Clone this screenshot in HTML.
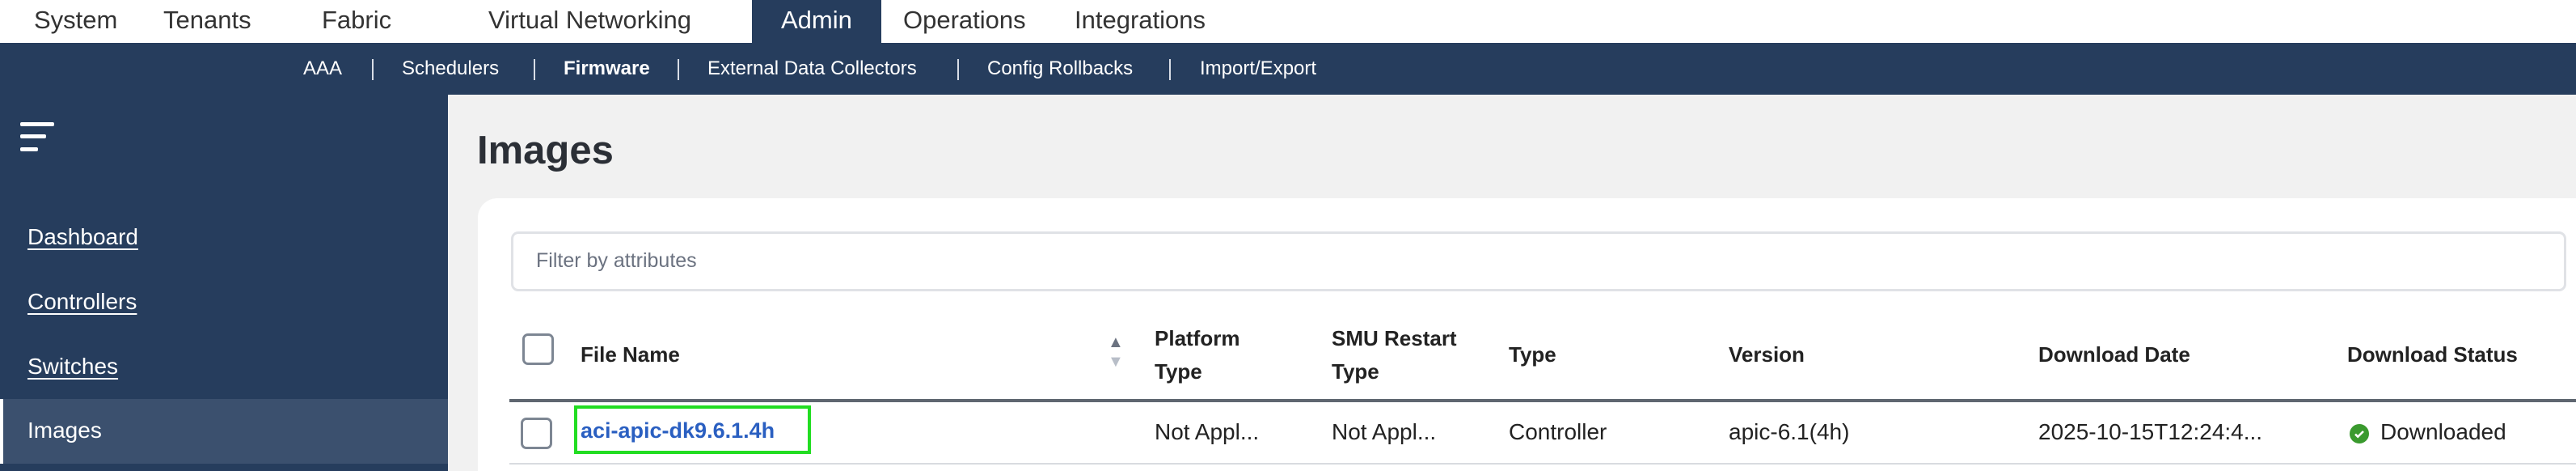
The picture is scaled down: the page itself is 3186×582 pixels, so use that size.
<!DOCTYPE html>
<html style="overflow:hidden;height:582px"><head><meta charset="utf-8"><style>
*{margin:0;padding:0;box-sizing:border-box}
body{width:3186px;height:582px;overflow:hidden;background:#f1f1f1;font-family:"Liberation Sans",sans-serif;position:relative}
.a{position:absolute;white-space:nowrap}
.top{left:0;top:0;width:3186px;height:53px;background:#fff}
.tn{font-size:31px;color:#333;top:7px}
.sub{left:0;top:53px;width:3186px;height:64px;background:#263d5d}
.sn{font-size:24px;color:#fff;top:71px}
.sep{width:2px;height:26px;background:#d8dde6;top:73px}
.side{left:0;top:117px;width:554px;height:465px;background:#263d5d}
.hb{background:#fff;height:5px;border-radius:2px;left:25px}
.si{font-size:28px;color:#fff;left:34px;text-decoration:underline;text-underline-offset:5px}
.card{left:591px;top:245px;width:2595px;height:337px;background:#fff;border-radius:24px 0 0 0}
.th{font-size:26px;font-weight:bold;color:#222}
.td{font-size:28px;color:#222;top:518px}
.cb{width:39px;height:39px;border:3px solid #7d8693;border-radius:7px;background:#fff}
</style></head><body>
<div class="a top"></div>
<div class="a" style="left:930px;top:0;width:160px;height:53px;background:#263d5d"></div>
<div class="a tn" style="left:42px">System</div>
<div class="a tn" style="left:202px">Tenants</div>
<div class="a tn" style="left:398px">Fabric</div>
<div class="a tn" style="left:604px">Virtual Networking</div>
<div class="a tn" style="left:966px;color:#fff">Admin</div>
<div class="a tn" style="left:1117px">Operations</div>
<div class="a tn" style="left:1329px">Integrations</div>
<div class="a sub"></div>
<div class="a sn" style="left:375px">AAA</div>
<div class="a sep" style="left:460px"></div>
<div class="a sn" style="left:497px">Schedulers</div>
<div class="a sep" style="left:660px"></div>
<div class="a sn" style="left:697px;font-weight:bold">Firmware</div>
<div class="a sep" style="left:838px"></div>
<div class="a sn" style="left:875px">External Data Collectors</div>
<div class="a sep" style="left:1184px"></div>
<div class="a sn" style="left:1221px">Config Rollbacks</div>
<div class="a sep" style="left:1446px"></div>
<div class="a sn" style="left:1484px">Import/Export</div>
<div class="a side"></div>
<div class="a hb" style="top:151px;width:42px"></div>
<div class="a hb" style="top:166px;width:32px"></div>
<div class="a hb" style="top:182px;width:22px"></div>
<div class="a si" style="top:277px">Dashboard</div>
<div class="a si" style="top:357px">Controllers</div>
<div class="a si" style="top:437px">Switches</div>
<div class="a" style="left:0;top:493px;width:554px;height:80px;background:#3b506e"></div>
<div class="a" style="left:0;top:493px;width:4px;height:80px;background:#fff"></div>
<div class="a" style="left:34px;top:516px;font-size:28px;color:#fff">Images</div>
<div class="a" style="left:590px;top:158px;font-size:49px;font-weight:bold;color:#2b2f36">Images</div>
<div class="a card"></div>
<div class="a" style="left:632px;top:286px;width:2542px;height:74px;border:3px solid #e0e2e6;border-radius:9px;background:#fff"></div>
<div class="a" style="left:663px;top:308px;font-size:25px;color:#6b7280">Filter by attributes</div>
<div class="a cb" style="left:646px;top:412px"></div>
<div class="a th" style="left:718px;top:423px">File Name</div>
<div class="a" style="left:1370px;top:411px;font-size:20px;color:#6b7280;line-height:24px">▲<br><span style="color:#b8bec8">▼</span></div>
<div class="a th" style="left:1428px;top:398px;line-height:41px">Platform<br>Type</div>
<div class="a th" style="left:1647px;top:398px;line-height:41px">SMU Restart<br>Type</div>
<div class="a th" style="left:1866px;top:423px">Type</div>
<div class="a th" style="left:2138px;top:423px">Version</div>
<div class="a th" style="left:2521px;top:423px">Download Date</div>
<div class="a th" style="left:2903px;top:423px">Download Status</div>
<div class="a" style="left:630px;top:493px;width:2600px;height:4px;background:#5f6670"></div>
<div class="a cb" style="left:644px;top:516px"></div>
<div class="a" style="left:710px;top:501px;width:293px;height:60px;border:4px solid #22dd22"></div>
<div class="a" style="left:718px;top:517px;font-size:27px;font-weight:bold;color:#2a5fc1">aci-apic-dk9.6.1.4h</div>
<div class="a td" style="left:1428px">Not Appl...</div>
<div class="a td" style="left:1647px">Not Appl...</div>
<div class="a td" style="left:1866px">Controller</div>
<div class="a td" style="left:2138px">apic-6.1(4h)</div>
<div class="a td" style="left:2521px">2025-10-15T12:24:4...</div>
<svg class="a" style="left:2906px;top:524px" width="24" height="24" viewBox="0 0 24 24"><circle cx="12" cy="12" r="12" fill="#3a9a2e"/><path d="M7 12.5l3.2 3.2L17 9" stroke="#fff" stroke-width="2.6" fill="none"/></svg>
<div class="a td" style="left:2944px">Downloaded</div>
<div class="a" style="left:630px;top:572px;width:2600px;height:2px;background:#d8dbe0"></div>
</body></html>
